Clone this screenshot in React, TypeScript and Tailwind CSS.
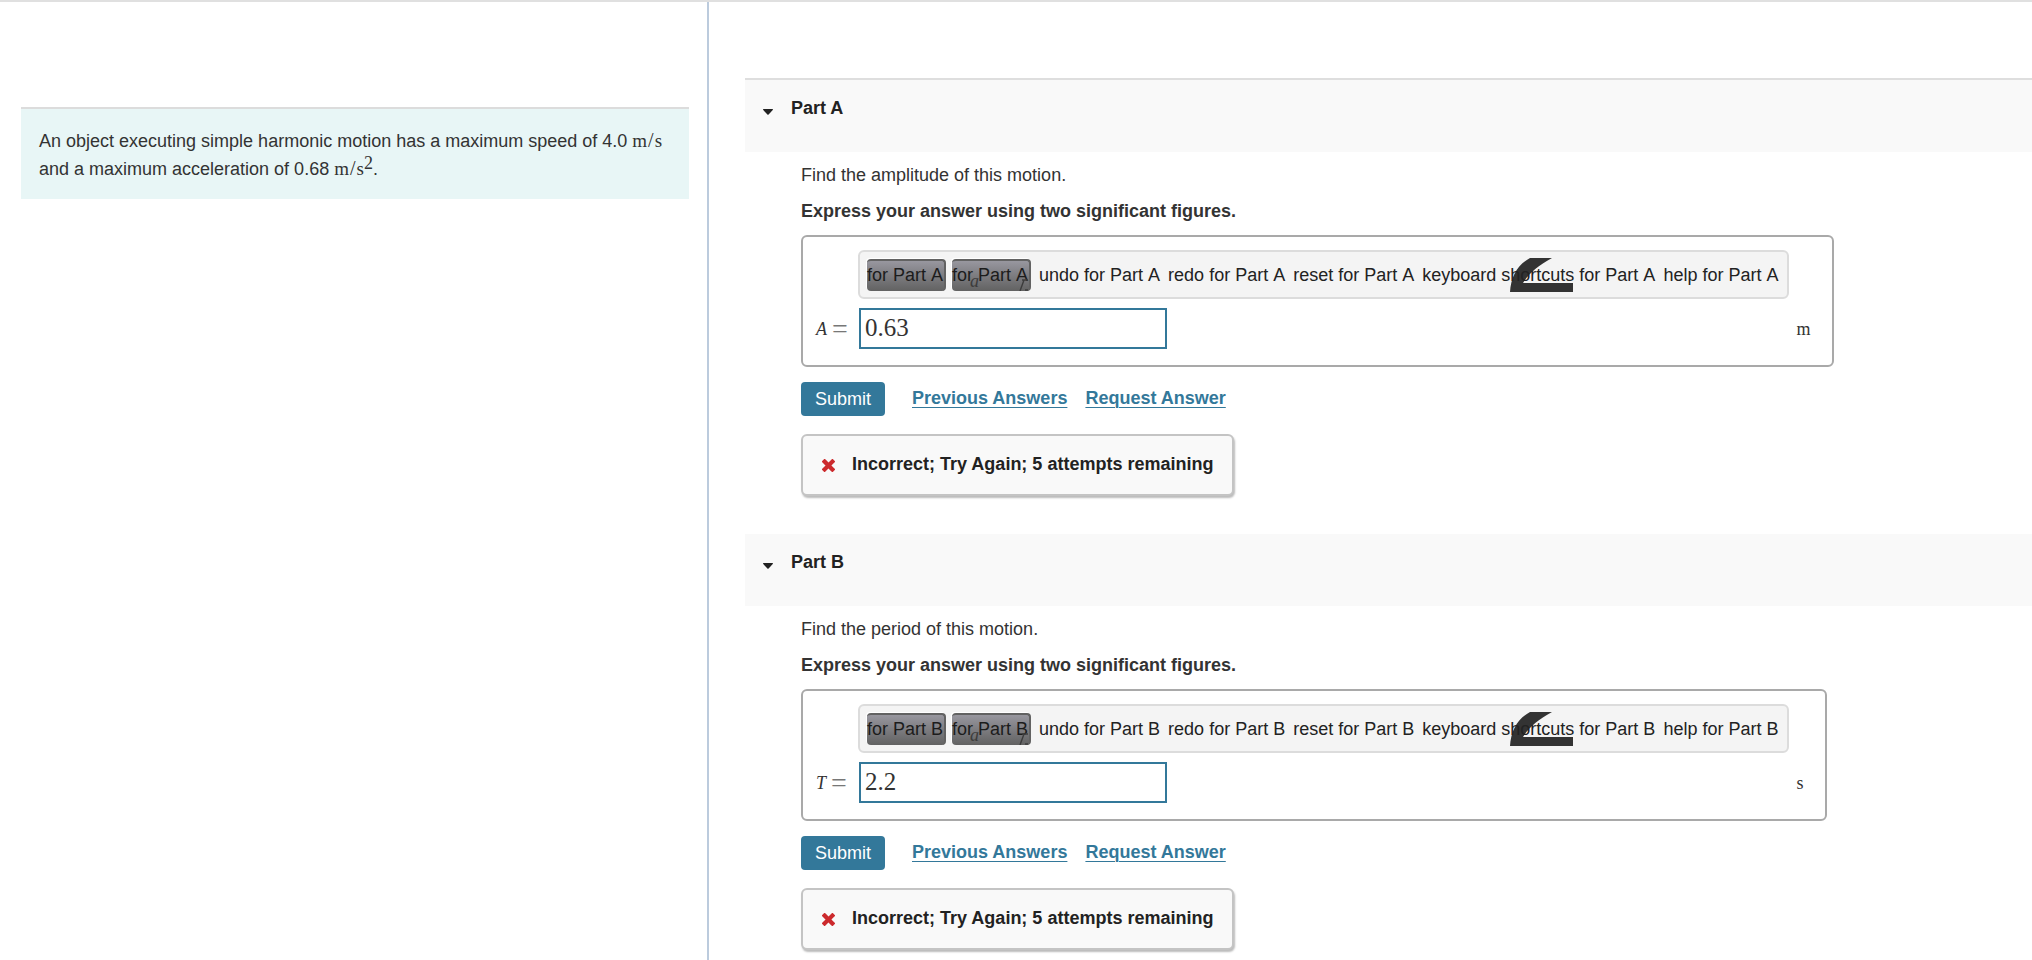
import { useState } from "react";

type Part = {
  id: string;
  prompt: string;
  symbol: string;
  unit: string;
  answer: string;
};

const PARTS: Part[] = [
  { id: "A", prompt: "Find the amplitude of this motion.", symbol: "A", unit: "m", answer: "0.63" },
  { id: "B", prompt: "Find the period of this motion.", symbol: "T", unit: "s", answer: "2.2" },
];

const TOOLS = ["undo", "redo", "reset", "keyboard shortcuts", "help"] as const;

export default function App() {
  return (
    <div className="flex min-h-screen border-t-2 border-[#e0e0e0] bg-white font-['Liberation_Sans',Arial,sans-serif] text-lg leading-6 text-[#333]">
      <aside className="w-[709px] shrink-0 border-r-2 border-[#bccbdd] pt-[105px] pr-[18px] pl-[21px]">
        <p className="border-t-2 border-[#dcdcdc] bg-[#e8f6f6] px-[18px] pt-[18px] pb-4 leading-7">
          An object executing simple harmonic motion has a maximum speed of 4.0 <MetersPerSecond />
          <br />
          and a maximum acceleration of 0.68 <MetersPerSecond squared />.
        </p>
      </aside>

      <main className="min-w-0 flex-1 pt-[76px] pl-9">
        {PARTS.map((part, i) => (
          <PartSection key={part.id} part={part} first={i === 0} />
        ))}
      </main>
    </div>
  );
}

function MetersPerSecond({ squared = false }: { squared?: boolean }) {
  return (
    <span className="font-['Liberation_Serif',serif] text-[19px] leading-none whitespace-nowrap">
      m<span className="mx-px text-xl leading-none">/</span>s
      {squared && <sup className="-top-1.5 text-lg leading-none">2</sup>}
    </span>
  );
}

function PartSection({ part, first }: { part: Part; first: boolean }) {
  const [open, setOpen] = useState(true);

  return (
    <section className="mb-[38px]">
      <h2 className={first ? "border-t-2 border-[#dedede] bg-[#f9f9f9]" : "bg-[#f9f9f9]"}>
        <button
          type="button"
          aria-expanded={open}
          onClick={() => setOpen(!open)}
          className="flex h-[72px] w-full items-start gap-[18px] pt-4 pl-[18px] font-bold text-[#222]"
        >
          <svg viewBox="0 0 10 6" className="mt-[13px] h-1.5 w-2.5" fill="currentColor" aria-hidden="true">
            <path d="M0 .6Q0 0 .6 0H9.4Q10 0 10 .8L5.6 5.4Q5 6 4.4 5.4L0 .8Z" />
          </svg>
          Part {part.id}
        </button>
      </h2>

      {open && (
        <div className="pt-[11px] pl-14">
          <p>{part.prompt}</p>
          <p className="mt-3 font-bold">Express your answer using two significant figures.</p>
          <AnswerBox part={part} />

          <div className="mt-[15px] flex items-center">
            <button type="button" className="h-[34px] w-[84px] rounded-sm bg-[#33789a] text-white">
              Submit
            </button>
            <AnswerLink className="ml-[27px]">Previous Answers</AnswerLink>
            <AnswerLink className="ml-[18px]">Request Answer</AnswerLink>
          </div>

          <div className="mt-[18px] flex h-[62px] w-fit items-center gap-[17px] rounded-md border-2 border-[#c4c4c4] bg-[#f9f9f9] pr-[19px] pb-0.5 pl-[19px] font-bold text-[#222] shadow-[1px_2px_2px_#bbb]">
            <svg viewBox="0 0 13 13" className="mt-0.5 size-[13px]" stroke="#cc2a2d" strokeWidth="4.2" aria-hidden="true">
              <path d="M2.6 2.6L10.4 10.4M10.4 2.6L2.6 10.4" strokeLinecap="square" />
            </svg>
            Incorrect; Try Again; 5 attempts remaining
          </div>
        </div>
      )}
    </section>
  );
}

function AnswerLink({ className, children }: { className: string; children: string }) {
  return (
    <a
      href="#"
      className={`${className} pb-0.5 font-bold text-[#33789a] underline decoration-1 underline-offset-3`}
    >
      {children}
    </a>
  );
}

function AnswerBox({ part }: { part: Part }) {
  const [value, setValue] = useState(part.answer);
  const inputId = `answer-${part.id}`;

  return (
    <div className="mt-3 grid w-fit grid-cols-[55px_auto_auto] items-center gap-y-[9px] rounded-md border-2 border-[#a9a9a9] pt-[13px] pr-[22px] pb-4">
      <Toolbar partId={part.id} />
      <label
        htmlFor={inputId}
        className="col-start-1 flex items-center gap-[5px] pl-[13px] font-['Liberation_Serif',serif]"
      >
        <i>{part.symbol}</i>
        <span className="text-[28px] leading-6 text-[#777]">=</span>
      </label>
      <input
        id={inputId}
        type="text"
        value={value}
        onChange={(e) => setValue(e.target.value)}
        className="ml-px h-[41px] w-[308px] border-2 border-[#33789a] px-1 pb-0.5 font-['Liberation_Serif',serif] text-[25px] outline-none"
      />
      <span className="pl-[7px] font-['Liberation_Serif',serif]">{part.unit}</span>
    </div>
  );
}

function Toolbar({ partId }: { partId: string }) {
  return (
    <div className="col-start-2 flex h-[49px] items-center gap-2 rounded-md border-2 border-[#dcdcdc] bg-[#f4f4f4] pr-[9px] pl-[7px] whitespace-nowrap text-[#222] [font-kerning:none]">
      <div className="flex gap-1.5">
        <TemplateButton partId={partId} />
        <TemplateButton partId={partId} exponent />
      </div>
      {TOOLS.map((tool) => (
        <button key={tool} type="button" className="relative">
          {tool === "keyboard shortcuts" && <KeyboardMark />}
          <span className="relative">
            {tool} for Part {partId}
          </span>
        </button>
      ))}
    </div>
  );
}

// Dark template buttons; the second has small script letters over its label
function TemplateButton({ partId, exponent = false }: { partId: string; exponent?: boolean }) {
  return (
    <button
      type="button"
      className="relative h-8 w-[79px] rounded-sm border-t-2 border-r-2 border-[#626262] bg-linear-to-b from-[#98979f] to-[#626262] pb-0.5 text-left text-[#1c1c1c] shadow-[-1px_-1px_0_#fff]"
    >
      for Part {partId}
      {exponent && (
        <span
          aria-hidden="true"
          className="absolute inset-0 font-['Liberation_Serif',serif] leading-5 text-[#3c3c3c] italic"
        >
          <span className="absolute top-2.5 left-[18px]">a</span>
          <svg viewBox="0 0 10 12" className="absolute right-0 bottom-0 h-3 w-2.5" fill="none" stroke="currentColor">
            <path d="M1 12L5 1M3 1H9M6 11H9" strokeWidth="1.4" />
          </svg>
        </span>
      )}
    </button>
  );
}

function KeyboardMark() {
  return (
    <svg viewBox="0 0 63 34" className="absolute -top-[5px] left-[88px] h-[34px] w-[63px]" fill="#333" aria-hidden="true">
      <path d="M0 34C1 19 7 7 20 0H42C28 8 19 15 13 25H63V34Z" />
    </svg>
  );
}
